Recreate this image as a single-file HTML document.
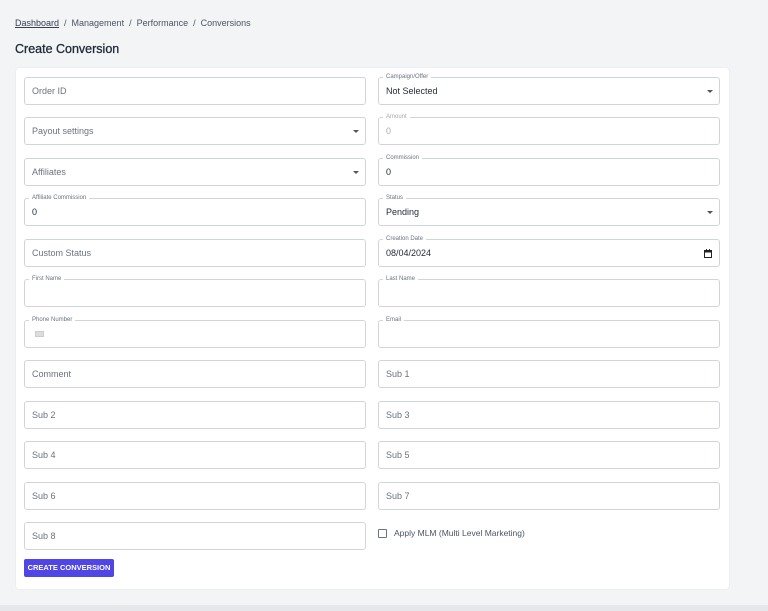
<!DOCTYPE html>
<html><head><meta charset="utf-8"><style>
*{box-sizing:border-box;margin:0;padding:0}
body{width:768px;height:611px;background:#f3f4f6;font-family:"Liberation Sans",sans-serif;position:relative;overflow:hidden}
.bc{position:absolute;left:15px;top:18px;font-size:9px;color:#4b5563}
.bc u{color:#374151}
h1{position:absolute;left:15px;top:42px;font-size:12.5px;font-weight:normal;color:#1f2937;-webkit-text-stroke:.3px #1f2937}
.card{position:absolute;left:16px;top:68px;width:713px;height:521px;background:#fff;border-radius:3px;box-shadow:0 0 1px rgba(0,0,0,.15)}
.f{position:absolute;width:342px;height:28px;border:1px solid #d1d5db;border-radius:3px;background:#fff}
.l{left:24px}.r{left:378px}
.ph{position:absolute;left:7px;top:8px;font-size:9px;color:#6b7280}
.v{position:absolute;left:7px;top:8px;font-size:9px;color:#1f2937}
.lab{position:absolute;left:4px;top:-5px;font-size:6px;color:#6b7280;background:#fff;padding:0 3px;line-height:8px}
.ar{position:absolute;right:6px;top:12px;width:0;height:0;border-left:3px solid transparent;border-right:3px solid transparent;border-top:3px solid #555}
.btn{position:absolute;left:24px;top:559px;width:90px;height:18px;background:#5046e5;border-radius:2px;color:#fff;font-size:7.5px;font-weight:bold;text-align:center;line-height:18px}
.cb{position:absolute;left:378px;top:529px;width:9px;height:9px;border:1px solid #6b7280;border-radius:1px}
.cbt{position:absolute;left:394px;top:528px;font-size:8.5px;color:#4b5563}
.foot{position:absolute;left:0;top:605px;width:768px;height:6px;background:#e5e7eb}
</style></head><body>
<div class="bc"><u>Dashboard</u> &nbsp;/&nbsp; Management &nbsp;/&nbsp; Performance &nbsp;/&nbsp; Conversions</div>
<h1>Create Conversion</h1>
<div class="card"></div>

<div class="f l" style="top:77px"><span class="ph">Order ID</span></div>
<div class="f r" style="top:77px"><span class="lab">Campaign/Offer</span><span class="v">Not Selected</span><span class="ar"></span></div>

<div class="f l" style="top:117px"><span class="ph">Payout settings</span><span class="ar"></span></div>
<div class="f r" style="top:117px"><span class="lab" style="color:#aaa">Amount</span><span class="v" style="color:#aaa">0</span></div>

<div class="f l" style="top:158px"><span class="ph">Affiliates</span><span class="ar"></span></div>
<div class="f r" style="top:158px"><span class="lab">Commission</span><span class="v">0</span></div>

<div class="f l" style="top:198px"><span class="lab">Affiliate Commission</span><span class="v">0</span></div>
<div class="f r" style="top:198px"><span class="lab">Status</span><span class="v">Pending</span><span class="ar"></span></div>

<div class="f l" style="top:239px"><span class="ph">Custom Status</span></div>
<div class="f r" style="top:239px"><span class="lab">Creation Date</span><span class="v">08/04/2024</span>
<svg style="position:absolute;right:7px;top:9px" width="8" height="9" viewBox="0 0 8 9"><rect x=".5" y="1.5" width="7" height="7" fill="none" stroke="#222"/><rect x=".5" y="1.5" width="7" height="2" fill="#222"/><rect x="2" y="0" width="1" height="2" fill="#222"/><rect x="5" y="0" width="1" height="2" fill="#222"/></svg></div>

<div class="f l" style="top:279px"><span class="lab">First Name</span></div>
<div class="f r" style="top:279px"><span class="lab">Last Name</span></div>

<div class="f l" style="top:320px"><span class="lab">Phone Number</span><span style="position:absolute;left:10px;top:10px;width:9px;height:6px;background:#ddd;border:1px solid #ccc"></span></div>
<div class="f r" style="top:320px"><span class="lab">Email</span></div>

<div class="f l" style="top:360px"><span class="ph">Comment</span></div>
<div class="f r" style="top:360px"><span class="ph">Sub 1</span></div>

<div class="f l" style="top:401px"><span class="ph">Sub 2</span></div>
<div class="f r" style="top:401px"><span class="ph">Sub 3</span></div>

<div class="f l" style="top:441px"><span class="ph">Sub 4</span></div>
<div class="f r" style="top:441px"><span class="ph">Sub 5</span></div>

<div class="f l" style="top:482px"><span class="ph">Sub 6</span></div>
<div class="f r" style="top:482px"><span class="ph">Sub 7</span></div>

<div class="f l" style="top:522px"><span class="ph">Sub 8</span></div>
<div class="cb"></div><div class="cbt">Apply MLM (Multi Level Marketing)</div>

<div class="btn">CREATE CONVERSION</div>
<div class="foot"></div>
</body></html>
